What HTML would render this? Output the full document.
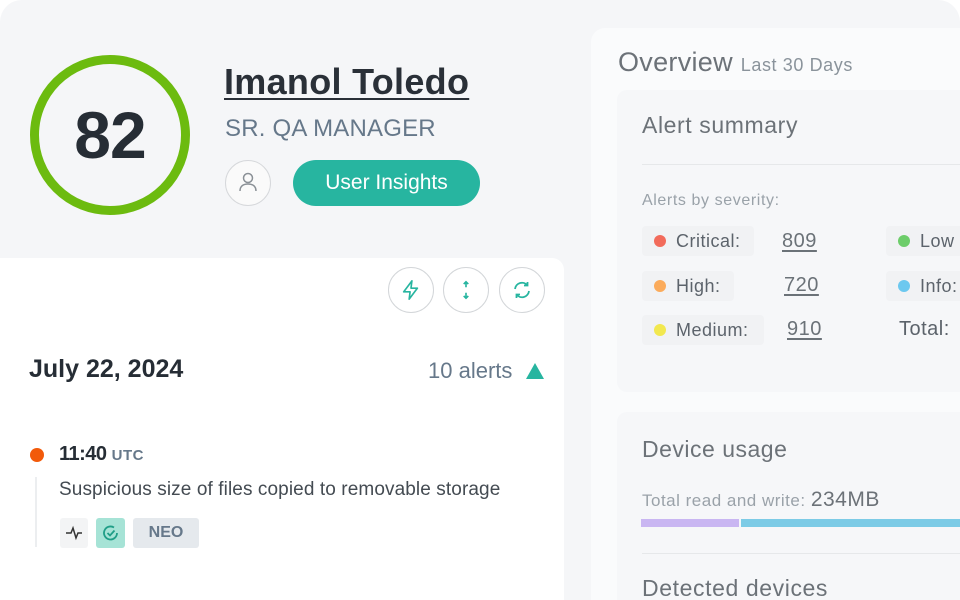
<!DOCTYPE html>
<html><head><meta charset="utf-8"><style>
*{margin:0;padding:0;box-sizing:border-box}
html,body{width:960px;height:600px;overflow:hidden;background:#fff;font-family:"Liberation Sans",sans-serif}
.wrap{position:relative;width:960px;height:600px;overflow:hidden}
.page{position:absolute;left:0;top:0;width:960px;height:600px;background:#f5f6f8;border-radius:22px 22px 0 0}
.abs{position:absolute}
.ring{left:30px;top:55px;width:160px;height:160px;border:9px solid #6cbb0f;border-radius:50%;display:flex;align-items:center;justify-content:center;font-size:66px;font-weight:bold;color:#262d35;letter-spacing:-1px}
.name{left:224px;top:61px;font-size:36px;font-weight:bold;color:#2a3038;text-decoration:underline;text-decoration-thickness:2px;text-underline-offset:4px;letter-spacing:0.3px}
.role{left:225px;top:115px;font-size:24px;color:#66788a;letter-spacing:0.2px}
.av{left:225px;top:160px;width:46px;height:46px;border:1.5px solid #d6d8db;border-radius:50%;background:#fafafa}
.btn{left:293px;top:160px;width:187px;height:46px;border-radius:23px;background:#27b5a0;color:#fff;font-size:21px;display:flex;align-items:center;justify-content:center}
.left{left:0;top:258px;width:564px;height:342px;background:#fff;border-radius:0 12px 0 0}
.ib{width:46px;height:46px;border:1.5px solid #d3d6d9;border-radius:50%;background:#fff;display:flex;align-items:center;justify-content:center}
.right{left:591px;top:28px;width:369px;height:572px;background:#fafbfc;border-radius:14px 0 0 0}
.card{left:617px;width:343px;background:#f6f7f9;border-radius:10px 0 0 10px}
.pill{position:absolute;height:30px;border-radius:4px;background:#f1f2f4;font-size:18px;color:#5c636b;display:flex;align-items:center;padding-left:12px;letter-spacing:0.5px}
.dot{width:12px;height:12px;border-radius:50%;margin-right:10px}
.num{position:absolute;font-size:20px;color:#6b7278;text-decoration:underline;text-underline-offset:3px;letter-spacing:0.5px}
</style></head><body><div class="wrap">
<div class="page"></div>
<div class="abs ring">82</div>
<div class="abs name">Imanol Toledo</div>
<div class="abs role">SR. QA MANAGER</div>
<div class="abs av"><svg width="46" height="46" viewBox="0 0 46 46" style="position:absolute;left:-1.5px;top:-1.5px"><circle cx="23" cy="18" r="4.5" fill="none" stroke="#8a9096" stroke-width="1.5"/><path d="M15 31c0-5 3.5-7 8-7s8 2 8 7" fill="none" stroke="#8a9096" stroke-width="1.5"/></svg></div>
<div class="abs btn">User Insights</div>

<div class="abs left"></div>
<div class="abs ib" style="left:388px;top:267px"><svg width="22" height="22" viewBox="0 0 24 24"><path d="M13 2L4 14h7l-1 8 9-12h-7z" fill="none" stroke="#27b5a0" stroke-width="1.8" stroke-linejoin="round"/></svg></div>
<div class="abs ib" style="left:443px;top:267px"><svg width="22" height="22" viewBox="0 0 24 24"><path d="M12 3v6M9.5 5.5L12 3l2.5 2.5M12 15v6M9.5 18.5L12 21l2.5-2.5" fill="none" stroke="#27b5a0" stroke-width="1.8"/></svg></div>
<div class="abs ib" style="left:499px;top:267px"><svg width="24" height="24" viewBox="0 0 24 24"><path d="M5 11a7 7 0 0 1 12.5-3.5M19 13a7 7 0 0 1-12.5 3.5M17.5 4v3.5H14M6.5 20v-3.5H10" fill="none" stroke="#27b5a0" stroke-width="1.8"/></svg></div>

<div class="abs" style="left:29px;top:355px;font-size:25px;font-weight:bold;color:#262d35">July 22, 2024</div>
<div class="abs" style="left:428px;top:358px;font-size:22px;color:#66788a">10 alerts</div>
<div class="abs" style="left:526px;top:363px;width:0;height:0;border-left:9px solid transparent;border-right:9px solid transparent;border-bottom:16px solid #27b5a0"></div>
<div class="abs" style="left:30px;top:448px;width:14px;height:14px;border-radius:50%;background:#f25a0a"></div>
<div class="abs" style="left:59px;top:443px;font-size:20px;color:#262d35;font-weight:bold;letter-spacing:-0.5px">11:40 <span style="font-size:15px;color:#66788a;font-weight:bold;letter-spacing:0.5px">UTC</span></div>
<div class="abs" style="left:35px;top:477px;width:2px;height:70px;background:#eceef0"></div>
<div class="abs" style="left:59px;top:479px;font-size:19px;color:#444b52;letter-spacing:0.1px">Suspicious size of files copied to removable storage</div>
<div class="abs" style="left:60px;top:518px;width:28px;height:30px;background:#f3f4f5;border-radius:3px"><svg width="28" height="30" viewBox="0 0 28 30"><path d="M6 15h5l2-5 3 10 2-5h4" fill="none" stroke="#333" stroke-width="1.5"/></svg></div>
<div class="abs" style="left:96px;top:518px;width:29px;height:30px;background:#a6e3d6;border-radius:3px"><svg width="29" height="30" viewBox="0 0 29 30"><path d="M21 15a6.5 6.5 0 1 1-3-5.5" fill="none" stroke="#1f9e87" stroke-width="1.8"/><path d="M11.5 15l2.5 2.5 4.5-5" fill="none" stroke="#1f9e87" stroke-width="1.8"/></svg></div>
<div class="abs" style="left:133px;top:518px;width:66px;height:30px;background:#e5e9ed;border-radius:3px;font-size:16px;font-weight:bold;color:#66788a;display:flex;align-items:center;justify-content:center">NEO</div>

<div class="abs right"></div>
<div class="abs" style="left:618px;top:47px;font-size:27px;color:#6c7278;letter-spacing:0.3px">Overview <span style="font-size:18px;color:#8a939b;letter-spacing:0.6px">Last 30 Days</span></div>
<div class="abs card" style="top:90px;height:302px"></div>
<div class="abs" style="left:642px;top:112px;font-size:23px;color:#6c7278;letter-spacing:0.6px">Alert summary</div>
<div class="abs" style="left:642px;top:164px;width:318px;height:1px;background:#e6e8ea"></div>
<div class="abs" style="left:642px;top:192px;font-size:16px;color:#9aa2a9;letter-spacing:0.6px">Alerts by severity:</div>
<div class="pill" style="left:642px;top:226px;width:112px"><div class="dot" style="background:#f26b5b"></div>Critical:</div>
<div class="pill" style="left:642px;top:271px;width:92px"><div class="dot" style="background:#fbab5b"></div>High:</div>
<div class="pill" style="left:642px;top:315px;width:122px"><div class="dot" style="background:#f2e84f"></div>Medium:</div>
<div class="num" style="left:782px;top:230px">809</div>
<div class="num" style="left:784px;top:274px">720</div>
<div class="num" style="left:787px;top:318px">910</div>
<div class="pill" style="left:886px;top:226px;width:74px;border-radius:4px 0 0 4px"><div class="dot" style="background:#6dcd6a"></div>Low</div>
<div class="pill" style="left:886px;top:271px;width:74px;border-radius:4px 0 0 4px"><div class="dot" style="background:#6cc8ef"></div>Info:</div>
<div class="abs" style="left:899px;top:318px;font-size:20px;color:#5c636b;letter-spacing:0.5px">Total:</div>
<div class="abs card" style="top:412px;height:188px;border-radius:10px 0 0 0"></div>
<div class="abs" style="left:642px;top:436px;font-size:23px;color:#6c7278;letter-spacing:0.5px">Device usage</div>
<div class="abs" style="left:642px;top:488px;font-size:17px;color:#9aa2a9;letter-spacing:0.5px">Total read and write: <span style="font-size:21px;color:#6c7278">234MB</span></div>
<div class="abs" style="left:641px;top:519px;width:98px;height:8px;background:#c9b6f2"></div>
<div class="abs" style="left:741px;top:519px;width:219px;height:8px;background:#7ccbe6"></div>
<div class="abs" style="left:642px;top:553px;width:318px;height:1px;background:#e6e8ea"></div>
<div class="abs" style="left:642px;top:575px;font-size:23px;color:#6c7278;letter-spacing:0.6px">Detected devices</div>
</div></body></html>
